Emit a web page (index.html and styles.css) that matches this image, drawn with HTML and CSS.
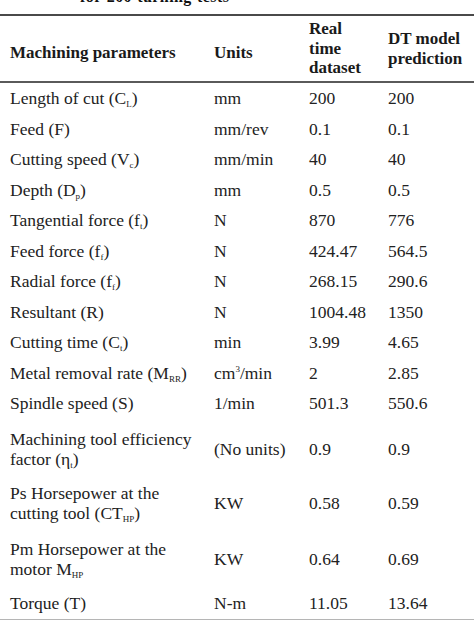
FILE: index.html
```html
<!DOCTYPE html>
<html>
<head>
<meta charset="utf-8">
<link rel="stylesheet" href="styles.css">
</head>
<body>
<div class="caption">for 200 turning tests</div>
<table class="data">
  <colgroup>
    <col class="c1"><col class="c2"><col class="c3"><col class="c4">
  </colgroup>
  <thead>
    <tr>
      <th class="low">Machining parameters</th>
      <th class="low">Units</th>
      <th>Real<br>time<br>dataset</th>
      <th>DT model<br>prediction</th>
    </tr>
  </thead>
  <tbody>
    <tr><td>Length of cut (C<sub>L</sub>)</td><td>mm</td><td>200</td><td>200</td></tr>
    <tr><td>Feed (F)</td><td>mm/rev</td><td>0.1</td><td>0.1</td></tr>
    <tr><td>Cutting speed (V<sub>c</sub>)</td><td>mm/min</td><td>40</td><td>40</td></tr>
    <tr><td>Depth (D<sub>p</sub>)</td><td>mm</td><td>0.5</td><td>0.5</td></tr>
    <tr><td>Tangential force (f<sub>t</sub>)</td><td>N</td><td>870</td><td>776</td></tr>
    <tr><td>Feed force (f<sub>f</sub>)</td><td>N</td><td>424.47</td><td>564.5</td></tr>
    <tr><td>Radial force (f<sub>f</sub>)</td><td>N</td><td>268.15</td><td>290.6</td></tr>
    <tr><td>Resultant (R)</td><td>N</td><td>1004.48</td><td>1350</td></tr>
    <tr><td>Cutting time (C<sub>t</sub>)</td><td>min</td><td>3.99</td><td>4.65</td></tr>
    <tr><td>Metal removal rate (M<sub>RR</sub>)</td><td>cm<sup>3</sup>/min</td><td>2</td><td>2.85</td></tr>
    <tr><td>Spindle speed (S)</td><td>1/min</td><td>501.3</td><td>550.6</td></tr>
    <tr class="tall t1"><td>Machining tool efficiency<br>factor (η<sub>t</sub>)</td><td>(No units)</td><td>0.9</td><td>0.9</td></tr>
    <tr class="tall t2"><td>Ps Horsepower at the<br>cutting tool (CT<sub>HP</sub>)</td><td>KW</td><td>0.58</td><td>0.59</td></tr>
    <tr class="tall t3"><td>Pm Horsepower at the<br>motor M<sub>HP</sub></td><td>KW</td><td>0.64</td><td>0.69</td></tr>
    <tr><td>Torque (T)</td><td>N-m</td><td>11.05</td><td>13.64</td></tr>
  </tbody>
</table>
</body>
</html>
```
FILE: styles.css
```css
html, body {
  margin: 0;
  padding: 0;
  background: #ffffff;
}
body {
  font-family: "Liberation Serif", "Times New Roman", serif;
  color: #222222;
  width: 474px;
  overflow: hidden;
}
.caption {
  font-weight: bold;
  font-size: 16px;
  line-height: 20px;
  height: 20px;
  margin-top: -13px;
  padding-left: 80px;
  color: #111;
  letter-spacing: 0.4px;
  word-spacing: 1px;
}
.data {
  border-collapse: collapse;
  width: 474px;
  table-layout: fixed;
  margin-top: 7px;
}
.c1 { width: 204px; }
.c2 { width: 95px; }
.c3 { width: 79px; }
.c4 { width: 96px; }
.data thead tr {
  border-top: 2px solid #4a4a4a;
  border-bottom: 2px solid #5a5a5a;
}
.data th {
  text-align: left;
  font-weight: bold;
  font-size: 17px;
  line-height: 19.5px;
  padding: 0 0 0 10px;
  vertical-align: middle;
  height: 65px;
  color: #1a1a1a;
}
.data th.low {
  padding-top: 8px;
  height: 57px;
}
.data td {
  font-size: 17.5px;
  line-height: 20.5px;
  padding: 5px 0 5px 10px;
  height: 20.5px;
  vertical-align: middle;
  white-space: nowrap;
}
.data tr.tall td {
  height: 41px;
}
.data tr.t1 td {
  padding-top: 10px;
  padding-bottom: 5.5px;
}
.data tr.t2 td {
  padding-top: 7.75px;
  padding-bottom: 7.75px;
}
.data tr.t3 td {
  padding-top: 7px;
  padding-bottom: 8.5px;
}
.data tbody tr:last-child {
  border-bottom: 3px solid #b5b5b5;
}
sub {
  font-size: 9px;
  vertical-align: -3px;
  line-height: 0;
}
sup {
  font-size: 9px;
  vertical-align: 7px;
  line-height: 0;
}
```
